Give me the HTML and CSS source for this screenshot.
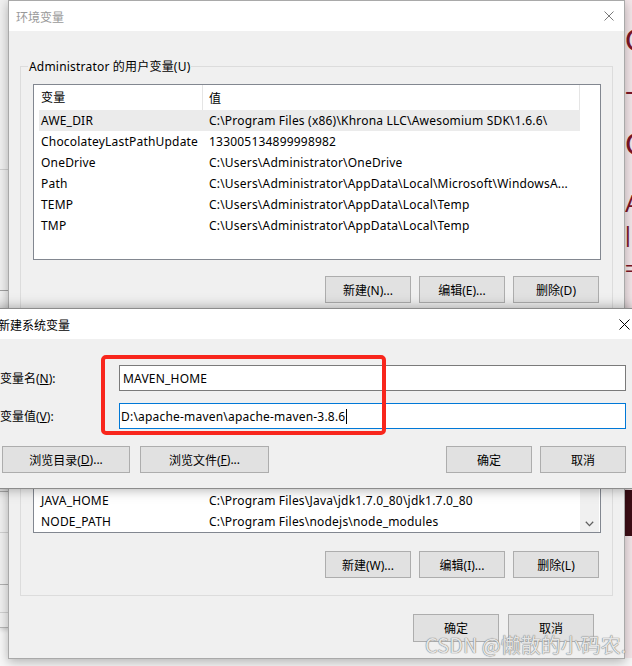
FILE: index.html
```html
<!DOCTYPE html>
<html lang="zh-CN">
<head>
<meta charset="utf-8">
<title>环境变量</title>
<link rel="stylesheet" href="styles.css">
</head>
<body>
<div class="desktop">
  <div class="bg-left">
    <div class="bl-text bl-t1">价值</div>
    <div class="bl-text bl-t2">方便</div>
    <div class="bl-line bl-l1"></div>
    <div class="bl-line bl-l2"></div>
    <div class="bl-line bl-l3"></div>
    <div class="bl-line bl-l4"></div>
    <div class="bl-line bl-l5"></div>
    <div class="bl-line bl-l6"></div>
  </div>

  <div class="bg-right">
    <div class="br-glyph br-g1">O</div>
    <div class="br-glyph br-g2">-</div>
    <div class="br-glyph br-g3">C</div>
    <div class="br-glyph br-g4">A</div>
    <div class="br-glyph br-g5">|</div>
    <div class="br-glyph br-g6">=</div>
    <div class="br-dark"></div>
  </div>

  <div class="win env">
    <div class="titlebar">
      <span class="title inactive">环境变量</span>
      <svg class="close" width="10" height="10" viewBox="0 0 10 10"><path d="M0.5 0.5 L9.5 9.5 M9.5 0.5 L0.5 9.5" stroke="#7a7a7a" stroke-width="1" fill="none"/></svg>
    </div>
    <div class="env-body">
      <div class="group g-user">
        <div class="legend">Administrator 的用户变量(U)</div>
        <div class="list list-user">
          <div class="list-head">
            <span class="c1">变量</span><span class="c2">值</span>
          </div>
          <div class="rows">
            <div class="row sel"><span class="n">AWE_DIR</span><span class="v">C:\Program Files (x86)\Khrona LLC\Awesomium SDK\1.6.6\</span></div>
            <div class="row"><span class="n">ChocolateyLastPathUpdate</span><span class="v">133005134899998982</span></div>
            <div class="row"><span class="n">OneDrive</span><span class="v">C:\Users\Administrator\OneDrive</span></div>
            <div class="row"><span class="n">Path</span><span class="v">C:\Users\Administrator\AppData\Local\Microsoft\WindowsA...</span></div>
            <div class="row"><span class="n">TEMP</span><span class="v">C:\Users\Administrator\AppData\Local\Temp</span></div>
            <div class="row"><span class="n">TMP</span><span class="v">C:\Users\Administrator\AppData\Local\Temp</span></div>
          </div>
        </div>
        <div class="btns">
          <div class="btn">新建(N)...</div>
          <div class="btn">编辑(E)...</div>
          <div class="btn">删除(D)</div>
        </div>
      </div>

      <div class="group g-sys">
        <div class="legend">系统变量(S)</div>
        <div class="list list-sys">
          <div class="list-main">
            <div class="list-head">
              <span class="c1">变量</span><span class="c2">值</span>
            </div>
            <div class="rows rows-end">
              <div class="row"><span class="n">ComSpec</span><span class="v">C:\Windows\system32\cmd.exe</span></div>
              <div class="row"><span class="n">DriverData</span><span class="v">C:\Windows\System32\Drivers\DriverData</span></div>
              <div class="row"><span class="n">JAVA_HOME</span><span class="v">C:\Program Files\Java\jdk1.7.0_80\jdk1.7.0_80</span></div>
              <div class="row"><span class="n">NODE_PATH</span><span class="v">C:\Program Files\nodejs\node_modules</span></div>
            </div>
          </div>
          <div class="vscroll">
            <div class="arrow">
              <svg width="9" height="6" viewBox="0 0 9 6"><path d="M0.8 0.8 L4.5 4.6 L8.2 0.8" stroke="#606060" stroke-width="1.3" fill="none"/></svg>
            </div>
          </div>
        </div>
        <div class="btns">
          <div class="btn">新建(W)...</div>
          <div class="btn">编辑(I)...</div>
          <div class="btn">删除(L)</div>
        </div>
      </div>

      <div class="footer">
        <div class="btn btn-tall">确定</div>
        <div class="btn btn-tall">取消</div>
      </div>
    </div>
  </div>

  <div class="win dlg">
    <div class="titlebar">
      <span class="title">新建系统变量</span>
      <svg class="close dlg-close" width="11" height="11" viewBox="0 0 11 11"><path d="M0.5 0.5 L10.5 10.5 M10.5 0.5 L0.5 10.5" stroke="#000" stroke-width="1" fill="none"/></svg>
    </div>
    <div class="dlg-body">
      <div class="field">
        <label class="flabel">变量名(<u>N</u>):</label>
        <div class="input">MAVEN_HOME</div>
      </div>
      <div class="field field2">
        <label class="flabel">变量值(<u>V</u>):</label>
        <div class="input focus">D:\apache-maven\apache-maven-3.8.6<span class="caret"></span></div>
      </div>
      <div class="dlg-btns">
        <div class="btn btn-wide">浏览目录(<u>D</u>)...</div>
        <div class="btn btn-wide">浏览文件(<u>F</u>)...</div>
        <div class="spacer"></div>
        <div class="btn">确定</div>
        <div class="btn">取消</div>
      </div>
    </div>
  </div>

  <div class="annot"></div>
  <div class="watermark">CSDN @懒散的小码农.</div>
</div>
</body>
</html>
```

FILE: styles.css
```css
* { box-sizing: border-box; }
html, body { margin: 0; padding: 0; }
body {
  width: 632px;
  height: 666px;
  overflow: hidden;
  background: #f7f7f7;
  font-family: "Noto Sans", "Noto Sans CJK SC", sans-serif;
  font-size: 12px;
  letter-spacing: 0.2px;
  color: #000;
}
.desktop {
  position: relative;
  width: 632px;
  height: 666px;
  overflow: hidden;
}

/* background windows */
.bg-left {
  position: absolute;
  left: 0; top: 0;
  width: 10px; height: 628px;
  background: #f0f0f0;
  border-bottom: 1px solid #b5b5b5;
  overflow: hidden;
  box-shadow: 0 2px 4px rgba(0,0,0,.15);
}
.bl-text {
  position: absolute;
  left: -15px;
  font-family: "Noto Sans CJK SC", sans-serif;
  font-size: 13px;
  color: #222;
  line-height: 16px;
}
.bl-t1 { top: 28px; }
.bl-t2 { top: 84px; }
.bl-line { position: absolute; left: 0; width: 10px; height: 1px; background: #d0d0d0; }
.bl-l1 { top: 169px; }
.bl-l2 { top: 290px; background: #a0a0a0; }
.bl-l3 { top: 491px; background: #b0b0b0; }
.bl-l4 { top: 532px; }
.bl-l5 { top: 584px; background: #b0b0b0; }
.bl-l6 { top: 612px; }

.bg-right {
  position: absolute;
  left: 624px; top: 0;
  width: 8px; height: 658px;
  background: #f3e6e9;
  overflow: hidden;
}
.br-glyph {
  position: absolute;
  left: 1px;
  color: #7d1526;
  font-family: "Liberation Sans", sans-serif;
  line-height: 1;
}
.br-g1 { top: 24px; font-size: 32px; }
.br-g2 { top: 78px; font-size: 26px; }
.br-g3 { top: 128px; font-size: 32px; }
.br-g4 { top: 192px; font-size: 24px; }
.br-g5 { top: 224px; font-size: 22px; }
.br-g6 { top: 258px; font-size: 22px; }
.br-dark {
  position: absolute;
  left: 0; top: 490px;
  width: 8px; height: 46px;
  background: #3d0e16;
}

/* windows */
.win {
  position: absolute;
  display: flex;
  flex-direction: column;
  background: #f0f0f0;
}
.titlebar {
  height: 30px;
  background: #fff;
  display: flex;
  align-items: center;
  flex-shrink: 0;
}
.title { font-family: "Noto Sans CJK SC", sans-serif; font-size: 12px; letter-spacing: 0; }
.title.inactive { color: #999; }
.close { margin-left: auto; }

.env {
  left: 8px; top: 0;
  width: 617px; height: 659px;
  border: 1px solid #a9a9a9;
  box-shadow: 0 3px 10px rgba(0,0,0,.28);
}
.env .titlebar { padding-left: 7px; }
.env .close { margin-right: 10px; }
.env-body {
  padding: 35px 11px 0 11px;
  display: flex;
  flex-direction: column;
}

.group {
  border: 1px solid #dcdcdc;
  padding: 0 11px 16px 12px;
}
.g-sys { margin-top: 15px; padding-bottom: 17px; }
.legend {
  margin: -8px 0 0 -5px;
  padding: 0 1px;
  width: fit-content;
  line-height: 16px;
  height: 16px;
  background: #f0f0f0;
  white-space: nowrap;
}
.list {
  margin-top: 9px;
  border: 1px solid #828790;
  background: #fff;
  overflow: hidden;
}
.list-user { height: 176px; }
.list-sys { height: 180px; display: flex; }
.list-main { width: 546px; display: flex; flex-direction: column; }
.list-head {
  width: 546px;
  height: 25px;
  display: flex;
  align-items: center;
  border-right: 1px solid #e5e5e5;
  flex-shrink: 0;
}
.c1 {
  width: 169px;
  height: 25px;
  line-height: 25px;
  padding-left: 7px;
  border-right: 1px solid #e5e5e5;
}
.c2 { padding-left: 6px; }
.rows { display: flex; flex-direction: column; }
.rows-end { flex: 1; justify-content: flex-end; overflow: hidden; }
.row {
  margin-left: 5px;
  width: 541px;
  height: 21px;
  flex-shrink: 0;
  display: flex;
  align-items: center;
  white-space: nowrap;
}
.row.sel { background: #ebebeb; }
.n { width: 163px; padding-left: 2px; flex-shrink: 0; }
.v { padding-left: 7px; }
.vscroll {
  width: 19px;
  background: #f0f0f0;
  display: flex;
  flex-direction: column;
  justify-content: flex-end;
}
.arrow {
  height: 17px;
  display: flex;
  align-items: center;
  justify-content: center;
}

.btns {
  display: flex;
  justify-content: flex-end;
  gap: 8px;
  margin-top: 16px;
  padding-right: 2px;
}
.g-sys .btns { margin-top: 18px; }
.btn {
  width: 86px;
  height: 27px;
  background: #e1e1e1;
  border: 1px solid #adadad;
  display: flex;
  align-items: center;
  justify-content: center;
  white-space: nowrap;
  letter-spacing: 0;
}
.btn-tall { height: 28px; }
.footer {
  display: flex;
  justify-content: flex-end;
  gap: 9px;
  margin-top: 18px;
  padding-right: 19px;
}

/* dialog */
.dlg {
  left: -12px; top: 308px;
  width: 645px; height: 181px;
  border: 1px solid #8c8c8c;
  box-shadow: 0 0 12px rgba(0,0,0,.35);
}
.dlg .titlebar { padding-left: 9px; }
.dlg .close { margin-right: 2px; }
.dlg-body {
  padding: 26px 6px 0 11px;
  display: flex;
  flex-direction: column;
}
.field { display: flex; align-items: center; height: 26px; }
.field2 { margin-top: 12px; }
.flabel { width: 119px; flex-shrink: 0; white-space: nowrap; letter-spacing: 0; }
.input {
  flex: 1;
  height: 26px;
  background: #fff;
  border: 1px solid #7a7a7a;
  padding-left: 3px;
  display: flex;
  align-items: center;
  white-space: nowrap;
}
.input.focus { border-color: #0078d7; padding-left: 1px; }
.caret {
  display: inline-block;
  width: 1px;
  height: 15px;
  background: #000;
  margin-left: 1px;
}
.dlg-btns {
  display: flex;
  gap: 8px;
  margin-top: 17px;
  padding-left: 2px;
}
.btn-wide { width: 128px; }
.btn-wide + .btn-wide { width: 129px; margin-left: 2px; }
.spacer { flex: 1; }

/* annotation overlay */
.annot {
  position: absolute;
  left: 101px; top: 355px;
  width: 285px; height: 80px;
  border: 4px solid #f8261c;
  border-radius: 5px;
}

.watermark {
  position: absolute;
  left: 425px; top: 633px;
  font-family: "Noto Sans CJK SC", sans-serif;
  font-size: 20px;
  line-height: 24px;
  letter-spacing: 0;
  color: #e4e4e4;
  text-shadow: 0 0 1px #6f6f6f, 0 0 1px #8a8a8a;
  white-space: nowrap;
}
```
